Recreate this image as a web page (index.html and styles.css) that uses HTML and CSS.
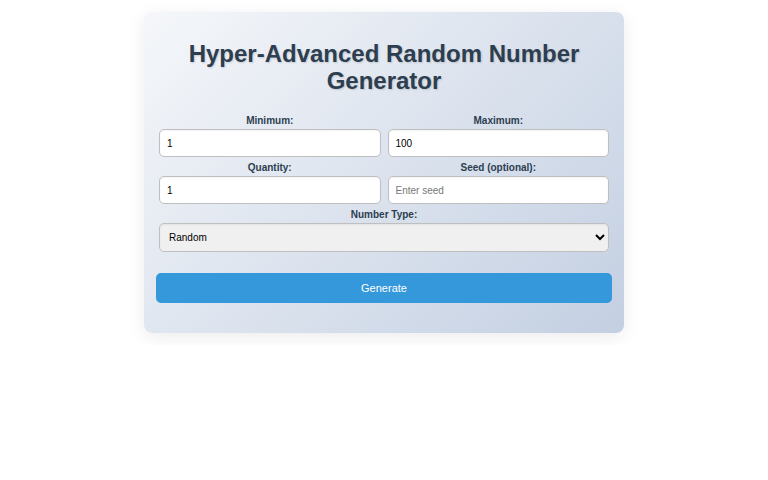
FILE: index.html
```html
<!DOCTYPE html>
<html lang="en">
<head>
    <meta charset="UTF-8">
    <meta name="viewport" content="width=device-width, initial-scale=1.0">
    <title>Hyper-Advanced Random Number Generator</title>
    <link rel="stylesheet" href="styles.css">
</head>
<body>

<div class="container">
    <h1>Hyper-Advanced Random Number Generator</h1>

    <div class="form-grid">
        <div class="form-group">
            <label for="min">Minimum:</label>
            <input type="number" id="min" value="1">
        </div>
        <div class="form-group">
            <label for="max">Maximum:</label>
            <input type="number" id="max" value="100">
        </div>
        <div class="form-group">
            <label for="quantity">Quantity:</label>
            <input type="number" id="quantity" value="1">
        </div>
        <div class="form-group">
            <label for="seed">Seed (optional):</label>
            <input type="text" id="seed" placeholder="Enter seed">
        </div>
        <div class="form-group full">
            <label for="type">Number Type:</label>
            <select id="type">
                <option>Random</option>
                <option>Even</option>
                <option>Odd</option>
                <option>Prime</option>
            </select>
        </div>
    </div>

    <button id="generate">Generate</button>
    <div class="result" id="result"></div>
</div>

</body>
</html>
```

FILE: styles.css
```css
body {
    font-family: "Liberation Sans", Arial, sans-serif;
    margin: 0;
    padding: 12px 0;
    background-color: #fff;
}
.container {
    width: 456px;
    margin: 0 auto;
    padding: 12px;
    border-radius: 8px;
    background: linear-gradient(135deg, #f5f7fa 0%, #c3cfe2 100%);
    box-shadow: 0 4px 18px rgba(0, 0, 0, 0.08);
}
h1 {
    font-size: 24px;
    line-height: 27px;
    text-align: center;
    color: #2c3e50;
    margin: 16px 0 21px;
    text-shadow: 1px 1px 2px rgba(0, 0, 0, 0.15);
}
.form-grid {
    display: grid;
    grid-template-columns: 1fr 1fr;
    gap: 5px 7px;
    padding: 0 3px;
}
.form-group {
    display: flex;
    flex-direction: column;
    gap: 3px;
}
.form-group.full {
    grid-column: 1 / -1;
}
label {
    font-size: 10px;
    font-weight: bold;
    text-align: center;
    color: #2c3e50;
}
input, select {
    box-sizing: border-box;
    height: 28px;
    padding: 0 7px;
    font-family: inherit;
    font-size: 10px;
    border: 1px solid #bfbfbf;
    border-radius: 5px;
    background-color: #fff;
    box-shadow: inset 0 1px 2px rgba(0, 0, 0, 0.05);
}
input::placeholder {
    color: #777;
}
select {
    height: 29px;
    padding: 0 5px;
    background-color: #f0f0f0;
}
#generate {
    display: block;
    width: 100%;
    height: 30px;
    margin-top: 21px;
    border: none;
    border-radius: 5px;
    background-color: #3498db;
    color: #fff;
    font-family: inherit;
    font-size: 11px;
    cursor: pointer;
}
#generate:hover {
    background-color: #2980b9;
}
.result {
    height: 18px;
}
```
